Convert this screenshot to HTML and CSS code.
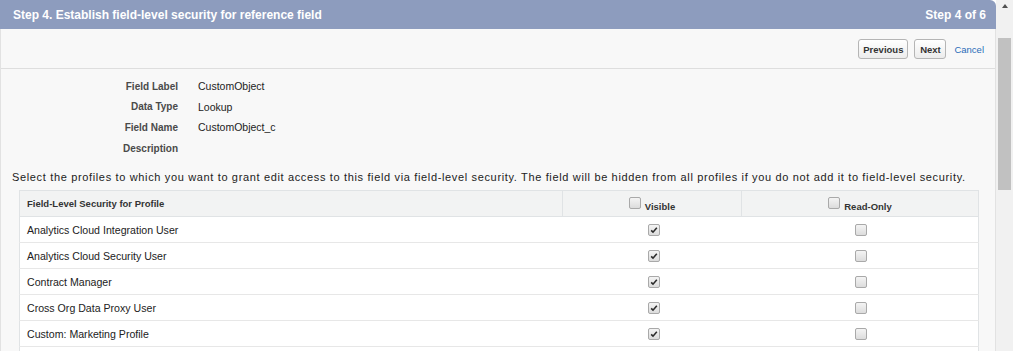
FILE: index.html
```html
<!DOCTYPE html>
<html>
<head>
<meta charset="utf-8">
<link rel="stylesheet" href="styles.css">
</head>
<body>
<div class="page">
  <div class="header">
    <h2 class="title">Step 4. Establish field-level security for reference field</h2>
    <span class="step">Step 4 of 6</span>
  </div>
  <div class="content">
    <div class="toolbar">
      <button class="btn">Previous</button>
      <button class="btn">Next</button>
      <a class="cancel">Cancel</a>
    </div>
    <div class="details">
      <div class="lbl">Field Label</div><div class="val">CustomObject</div>
      <div class="lbl">Data Type</div><div class="val">Lookup</div>
      <div class="lbl">Field Name</div><div class="val">CustomObject_c</div>
      <div class="lbl">Description</div><div class="val"></div>
    </div>
    <p class="intro">Select the profiles to which you want to grant edit access to this field via field-level security. The field will be hidden from all profiles if you do not add it to field-level security.</p>
    <table class="fls">
      <thead>
        <tr>
          <th class="c-profile">Field-Level Security for Profile</th>
          <th class="c-vis"><span class="cb hcb"></span>Visible</th>
          <th class="c-ro"><span class="cb hcb"></span>Read-Only</th>
        </tr>
      </thead>
      <tbody>
        <tr><td>Analytics Cloud Integration User</td><td class="ctr"><span class="cb on"><svg viewBox="0 0 12 12"><path d="M2.6 6.4 L4.8 8.6 L9.4 3.2" fill="none" stroke="#2b2b2b" stroke-width="1.9"/></svg></span></td><td class="ctr"><span class="cb"></span></td></tr>
        <tr><td>Analytics Cloud Security User</td><td class="ctr"><span class="cb on"><svg viewBox="0 0 12 12"><path d="M2.6 6.4 L4.8 8.6 L9.4 3.2" fill="none" stroke="#2b2b2b" stroke-width="1.9"/></svg></span></td><td class="ctr"><span class="cb"></span></td></tr>
        <tr><td>Contract Manager</td><td class="ctr"><span class="cb on"><svg viewBox="0 0 12 12"><path d="M2.6 6.4 L4.8 8.6 L9.4 3.2" fill="none" stroke="#2b2b2b" stroke-width="1.9"/></svg></span></td><td class="ctr"><span class="cb"></span></td></tr>
        <tr><td>Cross Org Data Proxy User</td><td class="ctr"><span class="cb on"><svg viewBox="0 0 12 12"><path d="M2.6 6.4 L4.8 8.6 L9.4 3.2" fill="none" stroke="#2b2b2b" stroke-width="1.9"/></svg></span></td><td class="ctr"><span class="cb"></span></td></tr>
        <tr><td>Custom: Marketing Profile</td><td class="ctr"><span class="cb on"><svg viewBox="0 0 12 12"><path d="M2.6 6.4 L4.8 8.6 L9.4 3.2" fill="none" stroke="#2b2b2b" stroke-width="1.9"/></svg></span></td><td class="ctr"><span class="cb"></span></td></tr>
        <tr class="spacer"><td></td><td></td><td></td></tr>
      </tbody>
    </table>
  </div>
</div>
<div class="scrollbar">
  <div class="arrow"></div>
  <div class="thumb"></div>
</div>
</body>
</html>
```

FILE: styles.css
```css
html, body {
  margin: 0;
  padding: 0;
  background: #ffffff;
  overflow: hidden;
}
body {
  display: flex;
  align-items: flex-start;
  font-family: "Liberation Sans", Arial, sans-serif;
  color: #333333;
  height: 351px;
}
.page {
  width: 996px;
  flex: none;
}
.header {
  height: 29px;
  background: #8d9cbe;
  border-top-right-radius: 6px;
  display: flex;
  align-items: center;
  justify-content: space-between;
  padding: 0 10px 0 13px;
  color: #ffffff;
}
.title {
  margin: 0;
  font-size: 12px;
  font-weight: bold;
}
.step {
  font-size: 12px;
  font-weight: bold;
}
.content {
  background: #f8f8f8;
  border-left: 1px solid #e2e2e2;
  border-right: 1px solid #e2e2e2;
  height: 340px;
}
.toolbar {
  height: 39px;
  border-bottom: 1px solid #dedede;
  display: flex;
  align-items: center;
  justify-content: flex-end;
  padding-right: 11px;
  gap: 6px;
}
.btn {
  height: 20px;
  min-width: 32px;
  padding: 0 4px;
  border: 1px solid #b5b5b5;
  border-radius: 3px;
  background: linear-gradient(#ffffff, #ececec);
  font-family: "Liberation Sans", Arial, sans-serif;
  font-size: 9.5px;
  font-weight: bold;
  color: #333333;
  margin-top: 1px;
}
.cancel {
  color: #2a6cb8;
  font-size: 9.5px;
  margin-left: 2px;
  margin-top: 1px;
}
.details {
  display: grid;
  grid-template-columns: 177px auto;
  column-gap: 20px;
  grid-auto-rows: 20.6px;
  align-items: center;
  padding-top: 7px;
}
.lbl {
  text-align: right;
  font-size: 10px;
  font-weight: bold;
  color: #4a4a4a;
}
.val {
  font-size: 10.5px;
  color: #222222;
}
.intro {
  margin: 12px 0 0 11px;
  font-size: 11px;
  letter-spacing: 0.65px;
  line-height: 14px;
  color: #222222;
  white-space: nowrap;
}
.fls {
  margin: 6px 0 0 18px;
  width: 960px;
  border-collapse: collapse;
  background: #ffffff;
  border: 1px solid #e0e3e5;
  font-size: 10.6px;
  color: #222222;
}
.fls th {
  height: 25px;
  line-height: 12px;
  background: #f2f3f3;
  font-size: 9.5px;
  font-weight: bold;
  color: #333333;
  border-bottom: 1px solid #e0e3e5;
  padding: 0;
}
.fls th.c-profile {
  text-align: left;
  padding-left: 7px;
  width: 535px;
}
.fls th.c-vis {
  width: 178px;
  border-left: 1px solid #e0e3e5;
  border-right: 1px solid #e0e3e5;
  padding-top: 3px;
  height: 22px;
}
.fls th.c-ro {
  padding-top: 3px;
  height: 22px;
}
.fls td {
  height: 25px;
  padding: 0 0 0 7px;
  border-bottom: 1px solid #e7e7e7;
}
.fls td.ctr {
  text-align: center;
  padding: 0 0 0 3px;
}
.cb {
  display: inline-block;
  width: 10px;
  height: 10px;
  border: 1px solid #a9a9a9;
  border-radius: 2px;
  background: linear-gradient(#f4f4f4, #dcdcdc);
  vertical-align: middle;
  position: relative;
}
.cb svg {
  position: absolute;
  left: 0;
  top: 0;
  width: 10px;
  height: 10px;
}
.hcb {
  margin-right: 4px;
  vertical-align: 1px;
}
.scrollbar {
  width: 17px;
  height: 351px;
  background: #f1f1f1;
  flex: none;
  display: flex;
  flex-direction: column;
  align-items: center;
}
.arrow {
  margin-top: 4px;
  width: 0;
  height: 0;
  border-left: 3px solid transparent;
  border-right: 3px solid transparent;
  border-bottom: 4px solid #505050;
}
.thumb {
  margin-top: 30px;
  width: 13px;
  height: 152px;
  background: #c1c1c1;
}
```
